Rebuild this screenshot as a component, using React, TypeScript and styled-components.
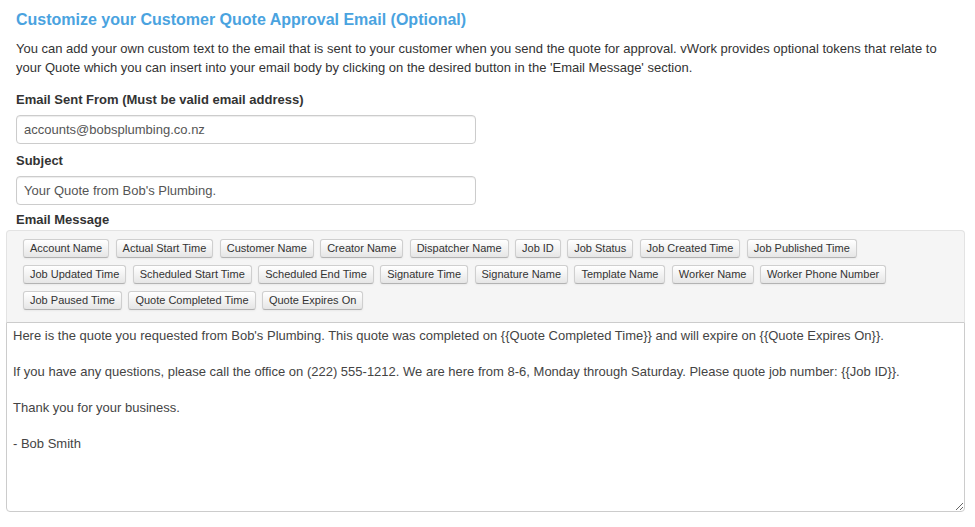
import React from "react";
import styled, { createGlobalStyle } from "styled-components";

const Global = createGlobalStyle`
  html, body { margin: 0; padding: 0; background: #fff; }
  body { font-family: "Liberation Sans", Arial, sans-serif; color: #333; }
  * { box-sizing: border-box; }
`;

const Page = styled.div`
  padding: 0 10px 15px 6px;
  width: 975px;
`;

const Intro = styled.div`
  padding-left: 10px;
`;

const Title = styled.h3`
  margin: 10px 0 0;
  font-size: 16px;
  line-height: 20px;
  font-weight: bold;
  color: #4aa3df;
`;

const Lead = styled.p`
  margin: 9px 0 0;
  font-size: 13px;
  line-height: 19px;
  color: #333;
  padding-right: 10px;
`;

const Field = styled.div<{ $top: number }>`
  display: flex;
  flex-direction: column;
  margin-top: ${(p) => p.$top}px;
`;

const Label = styled.label`
  font-size: 13px;
  line-height: 18px;
  font-weight: bold;
  color: #333;
`;

const TextInput = styled.input`
  margin-top: 6px;
  width: 460px;
  height: 29px;
  padding: 0 7px;
  font-family: "Liberation Sans", Arial, sans-serif;
  font-size: 13px;
  color: #555;
  border: 1px solid #ccc;
  border-radius: 4px;
  box-shadow: inset 0 1px 1px rgba(0, 0, 0, 0.075);
  background: #fff;
  outline: none;
`;

const TokenPanel = styled.div`
  margin-top: 1px;
  background: #f5f5f5;
  border: 1px solid #e3e3e3;
  border-bottom: none;
  border-radius: 4px 4px 0 0;
  padding: 8px 16px 12px;
  display: flex;
  flex-wrap: wrap;
  column-gap: 6.4px;
  row-gap: 7px;
`;

const TokenButton = styled.button`
  height: 19px;
  padding: 0 6px;
  font-family: "Liberation Sans", Arial, sans-serif;
  font-size: 11px;
  line-height: 17px;
  color: #333;
  background: linear-gradient(#ffffff, #e6e6e6);
  border: 1px solid #cfcfcf;
  border-bottom-color: #b3b3b3;
  border-radius: 3px;
  box-shadow: inset 0 1px 0 rgba(255, 255, 255, 0.2), 0 1px 2px rgba(0, 0, 0, 0.05);
  cursor: pointer;
  white-space: nowrap;
`;

const MessageArea = styled.textarea`
  display: block;
  width: 100%;
  height: 190px;
  margin: 0;
  padding: 4px 6px 3px;
  font-family: "Liberation Sans", Arial, sans-serif;
  font-size: 13px;
  line-height: 18px;
  color: #444;
  border: 1px solid #ccc;
  border-radius: 0 0 4px 4px;
  background: #fff;
  outline: none;
  resize: both;
`;

const tokens = [
  "Account Name",
  "Actual Start Time",
  "Customer Name",
  "Creator Name",
  "Dispatcher Name",
  "Job ID",
  "Job Status",
  "Job Created Time",
  "Job Published Time",
  "Job Updated Time",
  "Scheduled Start Time",
  "Scheduled End Time",
  "Signature Time",
  "Signature Name",
  "Template Name",
  "Worker Name",
  "Worker Phone Number",
  "Job Paused Time",
  "Quote Completed Time",
  "Quote Expires On",
];

const message = `Here is the quote you requested from Bob's Plumbing. This quote was completed on {{Quote Completed Time}} and will expire on {{Quote Expires On}}.

If you have any questions, please call the office on (222) 555-1212. We are here from 8-6, Monday through Saturday. Please quote job number: {{Job ID}}.

Thank you for your business.

- Bob Smith`;

export default function App() {
  return (
    <Page>
      <Global />
      <Intro>
        <Title>Customize your Customer Quote Approval Email (Optional)</Title>
        <Lead>
          You can add your own custom text to the email that is sent to your customer when you send the quote for approval. vWork provides optional tokens that relate to your Quote which you can insert into your email body by clicking on the desired button in the 'Email Message' section.
        </Lead>
        <Field $top={14}>
          <Label>Email Sent From (Must be valid email address)</Label>
          <TextInput defaultValue="accounts@bobsplumbing.co.nz" />
        </Field>
        <Field $top={8}>
          <Label>Subject</Label>
          <TextInput defaultValue="Your Quote from Bob's Plumbing." />
        </Field>
        <Field $top={6}>
          <Label>Email Message</Label>
        </Field>
      </Intro>
      <TokenPanel>
        {tokens.map((t) => (
          <TokenButton key={t} type="button">
            {t}
          </TokenButton>
        ))}
      </TokenPanel>
      <MessageArea defaultValue={message} />
    </Page>
  );
}
